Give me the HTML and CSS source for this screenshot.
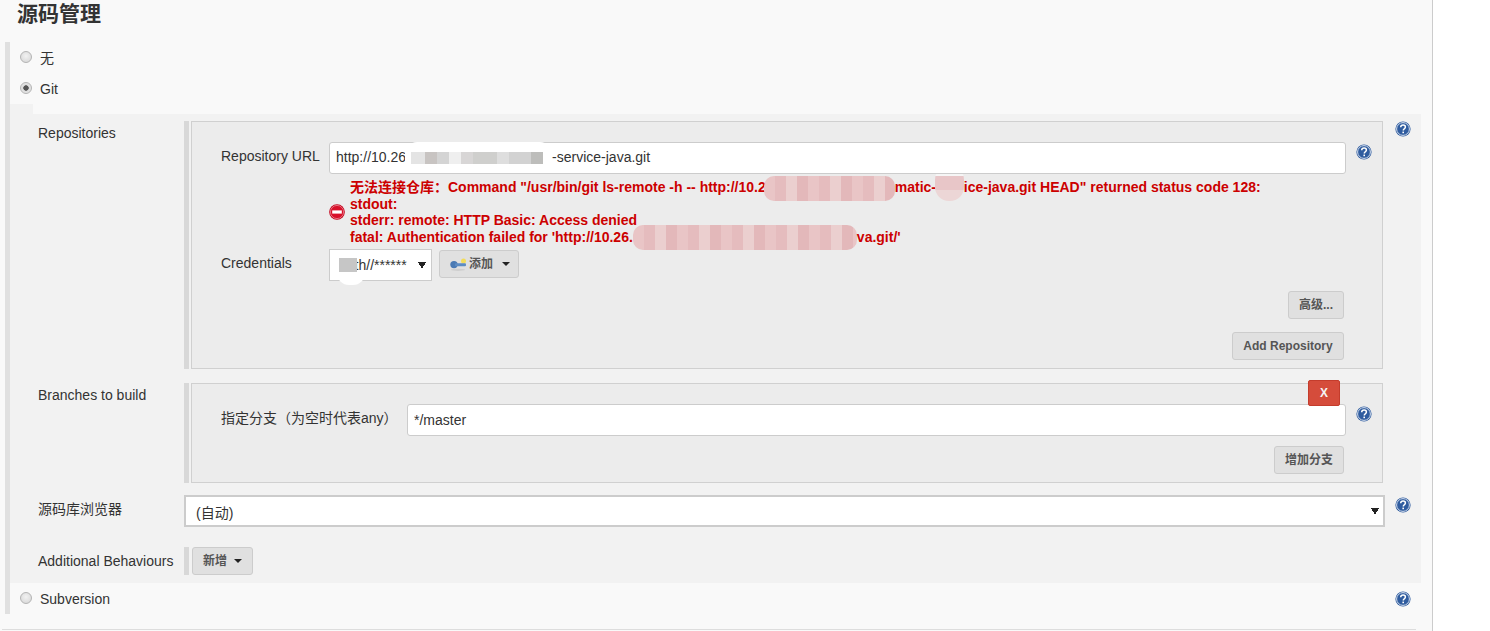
FILE: index.html
```html
<!DOCTYPE html>
<html lang="zh">
<head>
<meta charset="utf-8">
<title>源码管理</title>
<link rel="stylesheet" href="styles.css">
</head>
<body>
<svg class="defs" width="0" height="0" aria-hidden="true">
  <symbol id="help" viewBox="0 0 16 16">
    <circle cx="8" cy="8" r="7.6" fill="#2f5c9f"/>
    <circle cx="8" cy="8" r="6.4" fill="none" stroke="#e6ecf5" stroke-width="0.9"/>
    <path d="M5.7 6.2C5.8 4.8 6.8 4.1 8.1 4.1c1.4 0 2.3.8 2.3 1.9 0 1-.6 1.4-1.2 1.9-.6.4-.9.8-.9 1.6" fill="none" stroke="#fff" stroke-width="1.5"/>
    <rect x="7.4" y="10.6" width="1.6" height="1.6" fill="#fff"/>
  </symbol>
</svg>
<main class="page">
  <h2 class="title">源码管理</h2>
  <section class="scm">
    <label class="radio-row"><input class="radio" type="radio" name="scm"><span class="radio-text">无</span></label>
    <label class="radio-row"><input class="radio" type="radio" name="scm" checked><span class="radio-text">Git</span></label>
    <div class="notch"></div>
    <div class="panel">
      <div class="row row-repo">
        <div class="label label-repo">Repositories</div>
        <div class="chunk">
          <div class="box box-repo">
            <div class="field">
              <div class="field-label">Repository URL</div>
              <div class="input">http://10.26<span class="mask-grey"></span>-service-java.git</div>
              <svg class="help help-field"><use href="#help"/></svg>
            </div>
            <div class="error">
              <svg class="error-icon" viewBox="0 0 16 16"><circle cx="8" cy="8" r="7.8" fill="#c4001a"/><circle cx="8" cy="8" r="6.6" fill="#d8102a" stroke="#f3b9c0" stroke-width="0.6"/><rect x="3.2" y="6.4" width="9.6" height="3.2" fill="#fff"/></svg>
              <div class="error-text">
                <div>无法连接仓库：Command "/usr/bin/git ls-remote -h -- http://10.2<span class="mask-red mask-a"></span>matic-s<span class="mask-red mask-b"></span>ice-java.git HEAD" returned status code 128:</div>
                <div>stdout:</div>
                <div>stderr: remote: HTTP Basic: Access denied</div>
                <div>fatal: Authentication failed for 'http://10.26.<span class="mask-red mask-c"></span>va.git/'</div>
              </div>
            </div>
            <div class="field field-cred">
              <div class="field-label">Credentials</div>
              <div class="cred">
                <span class="select-wrap">
                  <select class="select select-cred"><option>auth//******</option></select>
                  <span class="mask-cred"></span>
                </span>
                <button class="btn btn-add" type="button">
                  <svg class="key" viewBox="0 0 17 13"><ellipse cx="8" cy="11.8" rx="7" ry="1.1" fill="#cfcfcf"/><circle cx="13.5" cy="2.9" r="2.5" fill="#f2dc5a"/><circle cx="4" cy="6.6" r="3.7" fill="#4a7ab4"/><rect x="5" y="5.2" width="11" height="3" rx="1" fill="#5d8cc2"/></svg>
                  <span class="cjk-label">添加</span><i class="caret"></i>
                </button>
              </div>
            </div>
            <div class="actions">
              <button class="btn btn-adv" type="button"><span class="cjk-label">高级...</span></button>
              <button class="btn btn-addrepo" type="button">Add Repository</button>
            </div>
          </div>
        </div>
        <svg class="help"><use href="#help"/></svg>
      </div>
      <div class="row row-branch">
        <div class="label label-branch">Branches to build</div>
        <div class="chunk">
          <div class="box box-branch">
            <button class="btn-x" type="button">X</button>
            <div class="field field-branch">
              <div class="field-label field-label-branch">指定分支（为空时代表any）</div>
              <input class="input input-real" type="text" value="*/master">
              <svg class="help help-field help-branch"><use href="#help"/></svg>
            </div>
            <div class="actions actions-branch">
              <button class="btn btn-branch" type="button"><span class="cjk-label">增加分支</span></button>
            </div>
          </div>
        </div>
      </div>
      <div class="row row-browser">
        <div class="label label-browser">源码库浏览器</div>
        <select class="select select-browser"><option>(自动)</option></select>
        <svg class="help help-browser"><use href="#help"/></svg>
      </div>
      <div class="row row-extra">
        <div class="label label-extra">Additional Behaviours</div>
        <div class="chunk chunk-extra">
          <button class="btn btn-new" type="button"><span class="cjk-label">新增</span><i class="caret"></i></button>
        </div>
      </div>
    </div>
    <div class="radio-row radio-row-last">
      <label class="radio-label"><input class="radio" type="radio" name="scm"><span class="radio-text">Subversion</span></label>
      <svg class="help"><use href="#help"/></svg>
    </div>
  </section>
  <div class="rule"></div>
</main>
</body>
</html>
```
FILE: styles.css
```css
* { box-sizing: border-box; }
html, body { margin: 0; height: 631px; overflow: hidden; background: #fff; }
body, button, input, select {
  font-family: "Liberation Sans", "Noto Sans CJK SC", sans-serif;
  font-size: 14px;
  color: #333;
}
.defs { position: absolute; }
.page {
  width: 1433px;
  height: 631px;
  background: #f9f9f9;
  border-right: 1px solid #ccc;
  overflow: hidden;
}
.title {
  margin: 0;
  height: 42px;
  padding-left: 17px;
  font-size: 21px;
  line-height: 27px;
  font-weight: 700;
  color: #333;
}
.scm {
  margin-left: 5px;
  width: 1416px;
  height: 572px;
  border-left: 5px solid #e0e0e0;
}
.radio-row {
  display: flex;
  align-items: center;
  height: 31px;
  padding-left: 10px;
  gap: 8px;
}
.radio-row-last {
  justify-content: space-between;
  padding-right: 10px;
}
.radio-label { display: flex; align-items: center; gap: 8px; }
.radio {
  appearance: none;
  margin: -2px 0 0 0;
  width: 12px;
  height: 12px;
  border-radius: 50%;
  border: 1px solid #b4b4b4;
  background: radial-gradient(circle at 50% 40%, #f2f2f2, #d4d4d4);
}
.radio:checked {
  background: radial-gradient(circle, #555 0 2.4px, #dcdcdc 3px, #ececec);
}
.radio-text { line-height: 18px; }
.notch { width: 23px; height: 10px; background: #f2f2f2; }
.panel {
  background: #f2f2f2;
  height: 469px;
  padding-top: 7px;
}
.row {
  display: grid;
  grid-template-columns: 174px 1201px 36px;
}
.row-repo { height: 248px; margin-bottom: 14px; }
.row-branch { height: 100px; margin-bottom: 12px; }
.row-browser { height: 32px; margin-bottom: 20px; }
.row-extra { height: 28px; }
.label { padding-left: 28px; line-height: 18px; }
.label-repo { padding-top: 3px; }
.label-branch { padding-top: 3px; }
.label-browser { padding-top: 5px; }
.label-extra { padding-top: 5px; white-space: nowrap; }
.help { width: 16px; height: 16px; margin-left: 10px; }
.help-browser { margin-top: 2px; }
.chunk {
  border-left: 5px solid #d8d8d8;
  padding-left: 2px;
  width: 1199px;
}
.box {
  background: #ececec;
  border: 1px solid #d0d0d0;
  height: 100%;
  padding: 20px 0 0 29px;
  position: relative;
}
.field {
  display: grid;
  grid-template-columns: 108px 1017px 37px;
  height: 32px;
}
.field-label { line-height: 18px; padding-top: 5px; white-space: nowrap; }
.input {
  height: 32px;
  background: #fff;
  border: 1px solid #ccc;
  border-radius: 3px;
  line-height: 29px;
  padding: 0 6px;
  white-space: nowrap;
  position: relative;
}
.input-real { width: 939px; outline: none; }
.help-field { margin: 2px 0 0 10px; }
.mask-grey {
  display: inline-block;
  width: 147px;
  height: 31px;
  margin: -1px 0 0 -1px;
  vertical-align: middle;
  border-radius: 12px;
  background:
    linear-gradient(90deg, #fff 0 6px, #e4e4e4 6px 20px, #c8c4c2 20px 32px, #d4d4d4 32px 44px, #efefef 44px 56px, #d8d6d6 56px 68px, #cfcfcd 68px 92px, #dedede 92px 104px, #d2d2d2 104px 126px, #bdbdbb 126px 138px, #fff 138px) center / 100% 12px no-repeat,
    #fff;
}
.error {
  display: flex;
  align-items: center;
  gap: 5px;
  margin: 4px 0 4px 108px;
  padding-top: 1px;
  height: 67px;
}
.error-icon { width: 16px; height: 16px; flex: none; }
.error-text {
  color: #c00;
  font-weight: 700;
  font-size: 14px;
  line-height: 16.5px;
  white-space: nowrap;
}
.error-text div { height: 16.5px; }
.mask-red {
  display: inline-block;
  height: 25px;
  margin: -6px 0;
  vertical-align: middle;
  border-radius: 10px;
  background:
    repeating-linear-gradient(90deg, #e9c5c6 0 11px, #e5bcbe 11px 22px, #ebcfcf 22px 33px, #e3b8ba 33px 44px),
    #e8c4c4;
}
.mask-a { width: 131px; margin-left: -2px; }
.mask-b {
  width: 29px;
  height: 35px;
  margin: -17px 0 -8px -9px;
  border-radius: 14px;
  background: linear-gradient(180deg, #f6f6f6 0 10px, #e8c6c8 10px 24px, #ecd6d6 24px);
}
.mask-c { width: 224px; }
.field-cred { height: 32px; }
.cred { display: flex; gap: 7px; align-items: flex-start; }
.select-wrap { position: relative; display: block; }
.select {
  appearance: none;
  display: block;
  height: 32px;
  background-color: #fff;
  border: 2px solid #ccc;
  border-radius: 0;
  outline: none;
  background-image:
    linear-gradient(to top right, transparent 50%, #222 50%),
    linear-gradient(to top left, transparent 50%, #222 50%);
  background-size: 4px 7px, 4px 7px;
  background-repeat: no-repeat;
}
.select-cred {
  width: 103px;
  border-width: 1px;
  padding-left: 9px;
  background-position: right 9px center, right 5px center;
}
.select-browser {
  width: 1201px;
  height: 32px;
  padding: 4px 0 0 10px;
  background-position: right 8px center, right 4px center;
}
.mask-cred {
  position: absolute;
  left: 10px;
  top: 9px;
  width: 18px;
  height: 14px;
  background: #c6c6c6;
}
.mask-cred::after {
  content: "";
  position: absolute;
  left: -2px;
  top: 14px;
  width: 28px;
  height: 13px;
  border-radius: 0 0 12px 12px;
  background: #fff;
}
.btn {
  height: 28px;
  background: #e0e0e0;
  border: 1px solid #ccc;
  border-radius: 3px;
  color: #555;
  font-size: 12px;
  font-weight: 700;
  padding: 0;
  white-space: nowrap;
  display: inline-flex;
  align-items: center;
  justify-content: center;
}
.cjk-label { margin-top: -3px; }
.btn-add { width: 80px; margin-top: 1px; gap: 2px; padding-left: 2px; }
.key { width: 17px; height: 13px; }
.caret {
  width: 0;
  height: 0;
  border-left: 4px solid transparent;
  border-right: 4px solid transparent;
  border-top: 4px solid #222;
  margin-left: 7px;
}
.actions {
  display: flex;
  flex-direction: column;
  align-items: flex-end;
  gap: 13px;
  margin: 10px 38px 0 0;
}
.btn-adv { width: 56px; }
.btn-addrepo { width: 112px; }
.box-branch { padding-top: 20px; }
.field-branch { grid-template-columns: 186px 939px 37px; }
.field-label-branch { padding-top: 5px; }
.actions-branch { margin-top: 10px; }
.btn-branch { width: 70px; }
.btn-x {
  position: absolute;
  top: -4px;
  right: 42px;
  width: 32px;
  height: 26px;
  background: #d54c3b;
  border: 1px solid #c43c2c;
  border-radius: 2px;
  color: #f4f4f4;
  font-weight: 700;
  font-size: 12px;
  padding: 0;
  z-index: 1;
}
.chunk-extra { padding-left: 3px; }
.btn-new { width: 61px; gap: 0; }
.rule {
  margin: 15px 0 0 2px;
  width: 1414px;
  height: 1px;
  background: #ddd;
}
```
